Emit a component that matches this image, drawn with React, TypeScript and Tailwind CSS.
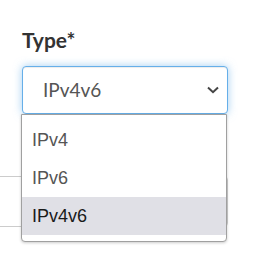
export default function App() {
    const options = ["IPv4", "IPv6", "IPv4v6"];
    const selected = "IPv4v6";

    return (
        <div className="relative w-[255px] h-[258px] overflow-hidden bg-white">
            <div className="pl-[22px] pt-[28px] w-[228px]">
                <label className="block text-[21px] leading-[24px] font-bold text-[#333] font-['Lato',sans-serif]">
                    Type*
                </label>

                <div className="relative mt-[14px] w-[206px]">
                    {/* select control */}
                    <div className="flex items-center justify-between h-[48px] pl-[20px] pr-[8px] border border-[#66afe9] rounded-[4px] bg-white shadow-[inset_0_1px_1px_rgba(0,0,0,0.075),0_0_8px_rgba(102,175,233,0.6)]">
                        <span className="text-[19px] text-[#555] font-['Lato',sans-serif]">{selected}</span>
                        <svg width="12" height="8" viewBox="0 0 12 8" fill="none">
                            <path d="M1 1.5 L6 6.2 L11 1.5" stroke="#444" strokeWidth="2" />
                        </svg>
                    </div>

                    {/* open option list */}
                    <div className="absolute left-[-1px] top-full z-10 w-[206px] py-[6px] bg-white border border-[#a0a0a0] rounded-b-[4px] shadow-[0_1px_3px_rgba(0,0,0,0.2)]">
                        {options.map((opt) => {
                            const isActive = opt === selected;
                            return (
                                <div
                                    key={opt}
                                    className={`${isActive ? "bg-[#e0e0e6] text-[#1a1a1a]" : "text-[#555]"} h-[38px] flex items-center pl-[10px] text-[18px] font-['Liberation_Sans',Arial,sans-serif]`}
                                >
                                    {opt}
                                </div>
                            );
                        })}
                    </div>
                </div>

                {/* field underneath, mostly covered */}
                <div className="mt-[62px] ml-[-40px] w-[246px] h-[51px] border border-[#ccc] rounded-[4px]" />
            </div>
        </div>
    );
}
